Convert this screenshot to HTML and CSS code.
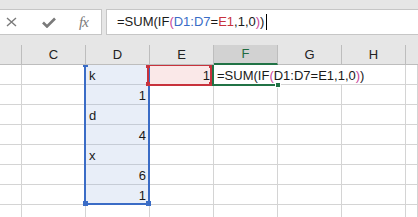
FILE: index.html
```html
<!DOCTYPE html>
<html lang="en">

<head>
    <meta charset="UTF-8">
    <meta name="viewport" content="width=device-width, initial-scale=1.0">
    <title>Sheet</title>
    <link rel="stylesheet" href="styles.css">
</head>

<body>
    <div class="topbar">
        <div class="actions">
            <svg class="icon-cancel" width="11" height="10" viewBox="0 0 11 10">
                <path d="M1 1 L10 9 M10 1 L1 9" stroke="#7a7a7a" stroke-width="1.4" fill="none"/>
            </svg>
            <svg class="icon-enter" width="14" height="11" viewBox="0 0 14 11">
                <path d="M1 5.5 L5 9.5 L13 1.5" stroke="#7a7a7a" stroke-width="2.6" fill="none"/>
            </svg>
            <span class="fx">fx</span>
        </div>
        <div class="formula">=SUM(IF<span class="paren">(</span><span class="ref-d">D1:D7</span>=<span class="ref-e">E1</span>,1,0<span class="paren">)</span>)<span class="caret"></span></div>
    </div>

    <div class="sheet">
        <div class="hdr-row">
            <div class="hdr"></div>
            <div class="hdr">C</div>
            <div class="hdr">D</div>
            <div class="hdr">E</div>
            <div class="hdr active">F</div>
            <div class="hdr">G</div>
            <div class="hdr">H</div>
            <div class="hdr last"></div>
        </div>

        <div class="grid">
            <!-- row 1 -->
            <div class="cell"></div>
            <div class="cell"></div>
            <div class="cell blue">k</div>
            <div class="cell pink num">1</div>
            <div class="cell edit">=SUM(IF<span class="paren">(</span>D1:D7=E1,1,0<span class="paren">)</span>)</div>
            <div class="cell"></div>
            <!-- row 2 -->
            <div class="cell"></div><div class="cell"></div>
            <div class="cell blue num">1</div>
            <div class="cell"></div><div class="cell"></div><div class="cell"></div><div class="cell"></div><div class="cell"></div>
            <!-- row 3 -->
            <div class="cell"></div><div class="cell"></div>
            <div class="cell blue">d</div>
            <div class="cell"></div><div class="cell"></div><div class="cell"></div><div class="cell"></div><div class="cell"></div>
            <!-- row 4 -->
            <div class="cell"></div><div class="cell"></div>
            <div class="cell blue num">4</div>
            <div class="cell"></div><div class="cell"></div><div class="cell"></div><div class="cell"></div><div class="cell"></div>
            <!-- row 5 -->
            <div class="cell"></div><div class="cell"></div>
            <div class="cell blue">x</div>
            <div class="cell"></div><div class="cell"></div><div class="cell"></div><div class="cell"></div><div class="cell"></div>
            <!-- row 6 -->
            <div class="cell"></div><div class="cell"></div>
            <div class="cell blue num">6</div>
            <div class="cell"></div><div class="cell"></div><div class="cell"></div><div class="cell"></div><div class="cell"></div>
            <!-- row 7 -->
            <div class="cell"></div><div class="cell"></div>
            <div class="cell blue num">1</div>
            <div class="cell"></div><div class="cell"></div><div class="cell"></div><div class="cell"></div><div class="cell"></div>
            <!-- row 8 -->
            <div class="cell"></div><div class="cell"></div><div class="cell"></div><div class="cell"></div>
            <div class="cell"></div><div class="cell"></div><div class="cell"></div><div class="cell"></div>
        </div>

        <!-- range highlights drawn over the grid -->
        <div class="range-d">
            <span class="knob knob-tl"></span>
            <span class="knob knob-bl"></span>
            <span class="knob knob-br"></span>
        </div>
        <div class="range-e">
            <span class="knob knob-tl"></span>
            <span class="knob knob-tr"></span>
            <span class="knob knob-bl"></span>
            <span class="knob knob-br"></span>
        </div>
        <div class="active-cell">
            <span class="fill-handle"></span>
        </div>
    </div>
</body>

</html>
```

FILE: styles.css
```css
body {
    margin: 0;
    padding: 0;
    width: 418px;
    height: 217px;
    overflow: hidden;
    background-color: #ffffff;
    font-family: "Liberation Sans", Arial, sans-serif;
    font-size: 13px;
    color: #1a1a1a;
}

.topbar {
    display: flex;
    box-sizing: border-box;
    height: 45px;
    padding-top: 9px;
    background-color: #e6e6e6;
}

.actions {
    display: flex;
    align-items: center;
    box-sizing: border-box;
    width: 102px;
    height: 26px;
    padding-left: 6px;
    background-color: #ffffff;
    border: 1px solid #c6c6c6;
    border-left: none;
}

.icon-enter {
    margin-left: 25px;
}

.fx {
    margin-left: 23px;
    font: italic 15px "Liberation Serif", "Times New Roman", serif;
    color: #7a7a7a;
    letter-spacing: -1px;
}

.formula {
    flex: 1;
    box-sizing: border-box;
    height: 26px;
    margin-left: 4px;
    padding-left: 10px;
    background-color: #ffffff;
    border: 1px solid #c6c6c6;
    border-right: none;
    line-height: 24px;
    white-space: nowrap;
}

.paren {
    color: #c8459a;
}

.ref-d {
    color: #3a6cc6;
}

.ref-e {
    color: #c8323c;
}

.caret {
    display: inline-block;
    width: 1px;
    height: 16px;
    margin-left: 2px;
    vertical-align: -4px;
    background-color: #000000;
}

.sheet {
    position: relative;
}

.hdr-row,
.grid {
    display: grid;
    grid-template-columns: 22px repeat(6, 64px) 1fr;
}

.hdr-row {
    position: relative;
    z-index: 3;
    height: 20px;
    background-color: #e6e6e6;
}

.hdr {
    box-sizing: border-box;
    border-right: 1px solid #bdbdbd;
    border-bottom: 1px solid #bdbdbd;
    line-height: 19px;
    text-align: center;
    color: #222222;
}

.hdr.last {
    border-right: none;
}

.hdr.active {
    background-color: #d2d2d2;
    color: #1f6b40;
    border-bottom: 2px solid #217346;
    line-height: 18px;
}

.grid {
    grid-auto-rows: 20px;
}

.cell {
    box-sizing: border-box;
    padding: 2px 3px 0;
    border-right: 1px solid #d4d4d4;
    border-bottom: 1px solid #d4d4d4;
    line-height: 18px;
    white-space: nowrap;
}

.cell.num {
    text-align: right;
}

.cell.blue {
    background-color: #e8eef8;
    border-bottom-color: #c6ccd6;
}

.cell.pink {
    background-color: #fae8e8;
}

.cell.edit {
    grid-column: span 3;
    position: relative;
    z-index: 2;
}

.range-d,
.range-e,
.active-cell {
    position: absolute;
    box-sizing: border-box;
}

.range-d {
    left: 84px;
    top: 19px;
    width: 66px;
    height: 141px;
    border: 2px solid #3a6cc6;
    border-top: none;
}

.range-e {
    left: 147px;
    top: 19px;
    width: 65px;
    height: 22px;
    border: 2px solid #c8323c;
    z-index: 1;
}

.knob {
    position: absolute;
    width: 5px;
    height: 5px;
}

.range-d .knob {
    background-color: #3a6cc6;
}

.range-e .knob {
    width: 4px;
    height: 4px;
    background-color: #c8323c;
}

.knob-tl {
    left: -3px;
    top: -2px;
}

.knob-tr {
    right: -3px;
    top: -2px;
}

.knob-bl {
    left: -3px;
    bottom: -3px;
}

.knob-br {
    right: -3px;
    bottom: -3px;
}

.range-e .knob-bl,
.range-e .knob-br {
    bottom: -2px;
}

.active-cell {
    left: 212px;
    top: 19px;
    width: 66px;
    height: 22px;
    border-left: 2px solid #217346;
    border-bottom: 2px solid #217346;
    z-index: 2;
}

.fill-handle {
    position: absolute;
    right: -3px;
    bottom: -4px;
    width: 4px;
    height: 4px;
    background-color: #217346;
    border: 1px solid #ffffff;
}
```
